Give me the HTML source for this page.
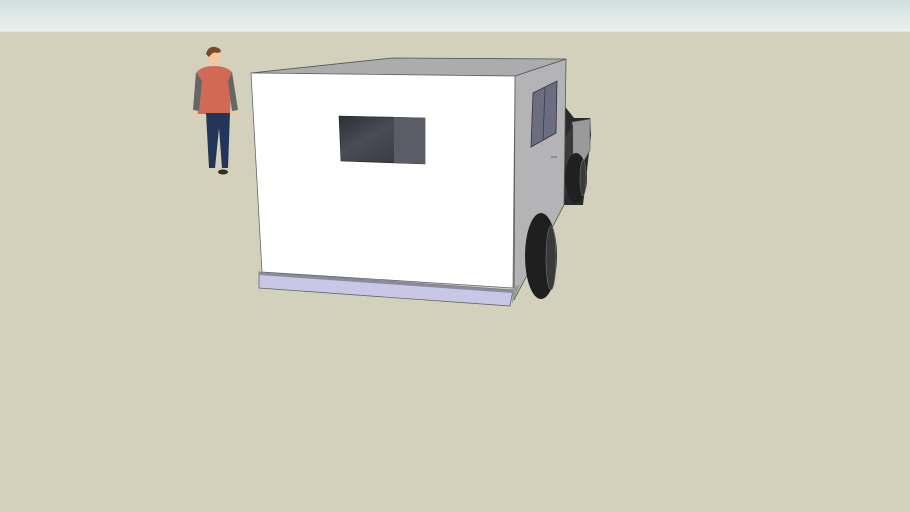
<!DOCTYPE html>
<html><head><style>
html,body{margin:0;padding:0;width:910px;height:512px;overflow:hidden;background:#d3d1bb}
</style></head><body>
<svg width="910" height="512" viewBox="0 0 910 512" xmlns="http://www.w3.org/2000/svg">
<defs>
<linearGradient id="sky" x1="0" y1="0" x2="0" y2="1">
<stop offset="0" stop-color="#d2dfe0"/><stop offset="1" stop-color="#eaf0ee"/>
</linearGradient>
<linearGradient id="win" x1="0" y1="0" x2="1" y2="1">
<stop offset="0" stop-color="#2e3038"/><stop offset="0.4" stop-color="#4a4c56"/><stop offset="1" stop-color="#33353c"/>
</linearGradient>
</defs>
<rect x="0" y="0" width="910" height="31" fill="url(#sky)"/>
<rect x="0" y="31" width="910" height="1" fill="#e4e6dc"/>
<rect x="0" y="32" width="910" height="480" fill="#d3d1bb"/>

<!-- cab -->
<polygon points="563,104 574,118 590,118 591,135 583,205 563,205" fill="#2a2a2a"/>
<polygon points="572,122 590,119 590,150 580,168 572,170" fill="#9a9a9c" stroke="#555" stroke-width="0.6"/>
<polygon points="565,138 573,124 573,190 565,195" fill="#3a3a3a"/>
<!-- rear wheel -->
<ellipse cx="576" cy="178" rx="11" ry="25" fill="#202020"/>
<ellipse cx="583" cy="178" rx="3" ry="18" fill="#3a3a3a" stroke="#777" stroke-width="0.5"/>

<!-- side face -->
<polygon points="515,76 566,59 564,205 514,300" fill="#b4b4b6" stroke="#555" stroke-width="0.8"/>
<!-- side window -->
<polygon points="533,93 557,81 556,133 531,147" fill="#6b6e80" stroke="#333" stroke-width="0.8"/>
<line x1="545" y1="88" x2="543" y2="140" stroke="#3a3c48" stroke-width="0.8"/>
<line x1="551" y1="157" x2="557" y2="157" stroke="#555" stroke-width="0.8"/>

<!-- front wheel -->
<ellipse cx="541" cy="256" rx="16" ry="43" fill="#1f1f1f"/>
<ellipse cx="551" cy="258" rx="5" ry="32" fill="#3a3a3a" stroke="#777" stroke-width="0.6"/>

<!-- top face -->
<polygon points="251,73 392,58 566,59 515,76" fill="#acacae" stroke="#555" stroke-width="0.8"/>
<!-- back face -->
<polygon points="251,73 515,76 513,288 262,272" fill="#ffffff" stroke="#666" stroke-width="0.8"/>
<!-- rear window -->
<polygon points="339,116 425,118 425,164 341,161" fill="url(#win)" stroke="#222" stroke-width="0.6"/>
<polygon points="394,117 425,118 425,164 394,163" fill="#5a5c66"/>
<!-- bumper -->
<polygon points="259,272 513,290 510,306 259,288" fill="#c8c8e6" stroke="#666" stroke-width="0.8"/>
<polygon points="259,272 513,290 513,293 259,275" fill="#8a8aa0"/>
<polygon points="513,288 520,284 512,304" fill="#999"/>

<!-- person -->
<g>
<ellipse cx="214" cy="56" rx="7" ry="8" fill="#f0c8a0"/>
<path d="M206 54 q2 -8 9 -7 q6 1 6 5 l-4 1 q-4 -2 -8 4 z" fill="#7a4a2a"/>
<rect x="211" y="62" width="6" height="5" fill="#f0c8a0"/>
<path d="M197 72 q5 -6 17 -6 q12 0 18 6 l-2 42 h-32 z" fill="#d06a55"/>
<path d="M196 72 l-3 38 l6 1 l3 -30 z" fill="#666"/>
<path d="M232 72 l6 38 l-6 1 l-4 -30 z" fill="#666"/>
<path d="M206 113 h24 l-2 55 h-6 l-3 -40 l-4 40 h-6 z" fill="#23365a"/>
<ellipse cx="223" cy="172" rx="5" ry="2.5" fill="#3a2a1a"/>
<circle cx="195" cy="114" r="2.5" fill="#f0c8a0"/>
<circle cx="236" cy="114" r="2.5" fill="#f0c8a0"/>
</g>
</svg>
</body></html>
